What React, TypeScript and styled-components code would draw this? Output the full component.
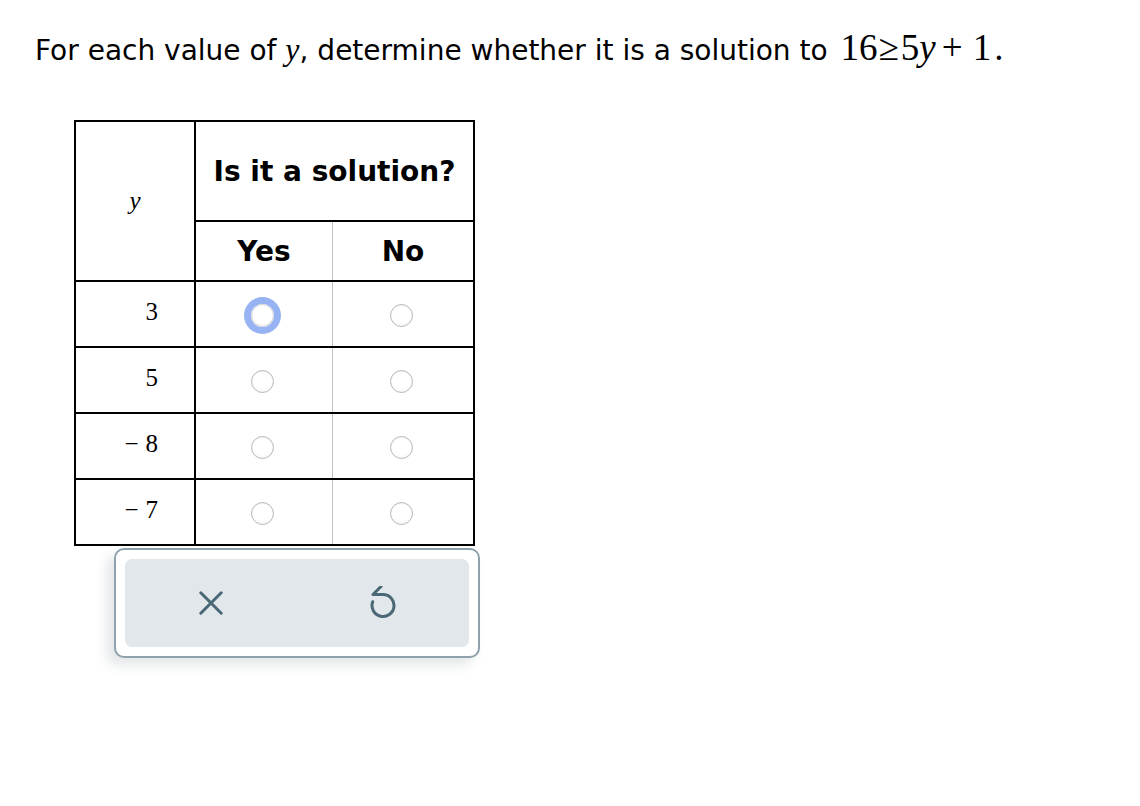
import React from "react";
import styled, { createGlobalStyle } from "styled-components";

const Global = createGlobalStyle`
  html, body { margin: 0; padding: 0; background: #fff; }
  body { font-family: "DejaVu Sans", Verdana, sans-serif; color: #000; }
`;

const Page = styled.div`
  padding: 28px 0 0 35px;
  width: 1140px;
  height: 806px;
  box-sizing: border-box;
`;

const Prompt = styled.p`
  margin: 0;
  height: 40px;
  font-size: 28px;
  line-height: 40px;
  white-space: nowrap;
`;

const MathVar = styled.span<{ size?: number }>`
  font-family: "Liberation Serif", "Times New Roman", serif;
  font-style: italic;
  font-size: ${(p) => p.size ?? 32}px;
`;

const MathText = styled.span`
  font-family: "Liberation Serif", "Times New Roman", serif;
  font-size: 37px;
  line-height: 40px;
  margin-left: 4px;
`;

const Op = styled.span<{ l?: number; r?: number }>`
  padding: 0 ${(p) => p.r ?? 3}px 0 ${(p) => p.l ?? 3}px;
`;

const Digit = styled.span`
  letter-spacing: 3px;
`;

const Block = styled.div`
  margin: 52px 0 0 39px;
  display: flex;
  flex-direction: column;
  align-items: flex-start;
`;

const Table = styled.table`
  border-collapse: collapse;
  table-layout: fixed;
`;

const Th = styled.th<{ w?: number; h?: number; divider?: "right" | "left" }>`
  border: 2px solid #000;
  ${(p) => (p.divider === "right" ? "border-right: 1px solid #c4c4c4;" : "")}
  ${(p) => (p.divider === "left" ? "border-left: 1px solid #c4c4c4;" : "")}
  width: ${(p) => (p.w ? `${p.w}px` : "auto")};
  height: ${(p) => (p.h ? `${p.h}px` : "auto")};
  padding: 0;
  font-weight: bold;
  font-size: 28px;
  text-align: center;
  vertical-align: middle;
`;

const VarHead = styled.th`
  border: 2px solid #000;
  width: 118px;
  padding: 0;
  text-align: center;
  vertical-align: middle;
  font-weight: normal;
`;

const ValueCell = styled.td`
  border: 2px solid #000;
  height: 64px;
  padding: 0 36px 0 0;
  text-align: right;
  vertical-align: middle;
  font-family: "Liberation Serif", "Times New Roman", serif;
  font-size: 25px;
  line-height: 26px;
`;

const ValueText = styled.span`
  display: inline-block;
  transform: translateY(-2px);
`;

const ChoiceCell = styled.td<{ divider?: "right" | "left" }>`
  border: 2px solid #000;
  ${(p) => (p.divider === "right" ? "border-right: 1px solid #c4c4c4;" : "")}
  ${(p) => (p.divider === "left" ? "border-left: 1px solid #c4c4c4;" : "")}
  height: 64px;
  padding: 0;
  text-align: center;
  vertical-align: middle;
  line-height: 0;
`;

const Radio = styled.span<{ focused?: boolean }>`
  display: inline-block;
  width: 23px;
  height: 23px;
  border-radius: 50%;
  box-sizing: border-box;
  border: 1px solid #b9b9b9;
  background: radial-gradient(circle at 50% 40%, #ffffff 55%, #ececec 100%);
  margin: 2px 4px 0 0;
  ${(p) =>
    p.focused
      ? "box-shadow: 0 0 0 7px #97b3f4; border-color: #cfcfcf;"
      : "box-shadow: inset 0 1px 1px rgba(0,0,0,0.06);"}
`;

const Minus = styled.span`
  margin-right: 7px;
`;

const Toolbar = styled.div`
  margin: 2px 0 0 40px;
  width: 366px;
  height: 110px;
  box-sizing: border-box;
  border: 2px solid #8ea2ac;
  border-radius: 10px;
  background: #fff;
  padding: 9px;
  box-shadow: -7px 7px 12px rgba(60, 80, 90, 0.14);
`;

const ToolInner = styled.div`
  height: 100%;
  border-radius: 7px;
  background: #e1e7ea;
  display: grid;
  grid-template-columns: 1fr 1fr;
  align-items: center;
  justify-items: center;
`;

const IconButton = styled.button`
  border: none;
  background: transparent;
  padding: 0;
  width: 40px;
  height: 40px;
  display: flex;
  align-items: center;
  justify-content: center;
  color: #4a6775;
  cursor: pointer;
`;

const CloseIcon = () => (
  <svg width="24" height="24" viewBox="0 0 24 24" fill="none" stroke="currentColor" strokeWidth="3" strokeLinecap="round">
    <path d="M1.8 1.8 L22.2 22.2 M22.2 1.8 L1.8 22.2" />
  </svg>
);

const UndoIcon = () => (
  <svg width="28" height="34" viewBox="0 0 28 34" fill="none" stroke="currentColor" strokeWidth="3" strokeLinecap="round" strokeLinejoin="round">
    <path d="M12 0.5 L4 8.5 L14 8.5 A11 11 0 1 1 3.7 15.7" />
  </svg>
);

const rows: { sign: boolean; n: number; focused?: boolean }[] = [
  { sign: false, n: 3, focused: true },
  { sign: false, n: 5 },
  { sign: true, n: 8 },
  { sign: true, n: 7 },
];

export default function App() {
  return (
    <Page>
      <Global />
      <Prompt>
        For each value of <MathVar>y</MathVar>, determine whether it is a solution to{" "}
        <MathText>
          16<Op l={1} r={2}>≥</Op>5<MathVar size={37}>y</MathVar>
          <Op l={6} r={10}>+</Op>
          <Digit>1</Digit>.
        </MathText>
      </Prompt>
      <Block>
        <Table>
          <thead>
            <tr>
              <VarHead rowSpan={2}>
                <MathVar size={25}>y</MathVar>
              </VarHead>
              <Th colSpan={2} h={98}>
                Is it a solution?
              </Th>
            </tr>
            <tr>
              <Th w={136} h={58} divider="right">
                Yes
              </Th>
              <Th w={140} h={58} divider="left">
                No
              </Th>
            </tr>
          </thead>
          <tbody>
            {rows.map((r) => (
              <tr key={r.n}>
                <ValueCell>
                  <ValueText>
                    {r.sign && <Minus>−</Minus>}
                    {r.n}
                  </ValueText>
                </ValueCell>
                <ChoiceCell divider="right">
                  <Radio focused={r.focused} />
                </ChoiceCell>
                <ChoiceCell divider="left">
                  <Radio />
                </ChoiceCell>
              </tr>
            ))}
          </tbody>
        </Table>
        <Toolbar>
          <ToolInner>
            <IconButton aria-label="Clear">
              <CloseIcon />
            </IconButton>
            <IconButton aria-label="Undo">
              <UndoIcon />
            </IconButton>
          </ToolInner>
        </Toolbar>
      </Block>
    </Page>
  );
}
